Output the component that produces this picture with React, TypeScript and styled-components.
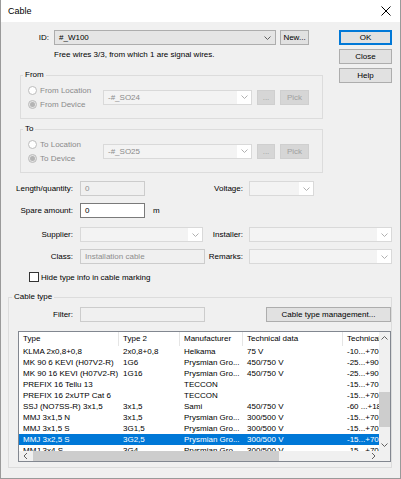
import styled, { createGlobalStyle } from 'styled-components';

const GlobalStyle = createGlobalStyle`
  html, body {
    margin: 0;
    padding: 0;
    background: #f0f0f0;
  }
  body {
    font-family: 'Liberation Sans', Arial, sans-serif;
    font-size: 8px;
    color: #000;
  }
  * {
    box-sizing: border-box;
  }
`;

type CableRow = {
  type: string;
  type2: string;
  maker: string;
  tech: string;
  temp: string;
};

const COLUMNS: { key: keyof CableRow; title: string; width: number }[] = [
  { key: 'type', title: 'Type', width: 100 },
  { key: 'type2', title: 'Type 2', width: 61 },
  { key: 'maker', title: 'Manufacturer', width: 63 },
  { key: 'tech', title: 'Technical data', width: 100 },
  { key: 'temp', title: 'Technical data 2', width: 90 },
];

const ROWS: CableRow[] = [
  { type: 'KLMA 2x0,8+0,8', type2: '2x0,8+0,8', maker: 'Helkama', tech: '75 V', temp: '-10...+70' },
  { type: 'MK 90 6 KEVI (H07V2-R)', type2: '1G6', maker: 'Prysmian Gro...', tech: '450/750 V', temp: '-25...+90' },
  { type: 'MK 90 16 KEVI (H07V2-R)', type2: '1G16', maker: 'Prysmian Gro...', tech: '450/750 V', temp: '-25...+90' },
  { type: 'PREFIX 16 Tellu 13', type2: '', maker: 'TECCON', tech: '', temp: '-15...+70' },
  { type: 'PREFIX 16 2xUTP Cat 6', type2: '', maker: 'TECCON', tech: '', temp: '-15...+70' },
  { type: 'SSJ (NO7SS-R) 3x1,5', type2: '3x1,5', maker: 'Sami', tech: '450/750 V', temp: '-60 ...+180' },
  { type: 'MMJ 3x1,5 N', type2: '3x1,5', maker: 'Prysmian Gro...', tech: '300/500 V', temp: '-15...+70' },
  { type: 'MMJ 3x1,5 S', type2: '3G1,5', maker: 'Prysmian Gro...', tech: '300/500 V', temp: '-15...+70' },
  { type: 'MMJ 3x2,5 S', type2: '3G2,5', maker: 'Prysmian Gro...', tech: '300/500 V', temp: '-15...+70' },
  { type: 'MMJ 3x4 S', type2: '3G4', maker: 'Prysmian Gro...', tech: '300/500 V', temp: '-15...+70' },
];

const SELECTED = 8;

const Window = styled.div`
  width: 401px;
  height: 479px;
  display: flex;
  flex-direction: column;
  background: #f0f0f0;
  border: 1px solid #9a9a9a;
  border-top: none;
  overflow: hidden;
`;

const TitleBar = styled.div`
  height: 22px;
  flex-shrink: 0;
  background: #fff;
  display: flex;
  align-items: center;
  justify-content: space-between;
  padding: 0 9px 0 7px;
`;

const Title = styled.span`
  font-size: 9px;
  color: #000;
`;

const Body = styled.div`
  padding: 0 8px 0 7px;
`;

const TopArea = styled.div`
  display: flex;
`;

const MainCol = styled.div`
  flex: 1;
`;

const ButtonCol = styled.div`
  width: 53px;
  padding-top: 8px;
  display: flex;
  flex-direction: column;
  gap: 4px;
`;

const IdRow = styled.div`
  margin-top: 8px;
  height: 15px;
  display: flex;
  align-items: center;
`;

const IdLabel = styled.span`
  width: 41px;
  text-align: right;
  margin-right: 5px;
`;

const InfoText = styled.div`
  margin: 4px 0 0 46px;
  line-height: 11px;
`;

const Button = styled.button<{ $w?: number; $default?: boolean; $h?: number }>`
  width: ${(p) => (p.$w ? `${p.$w}px` : '100%')};
  height: ${(p) => p.$h ?? 15}px;
  flex-shrink: 0;
  padding: 0;
  font-family: inherit;
  font-size: 8px;
  color: #000;
  background: #e1e1e1;
  border: 1px solid ${(p) => (p.$default ? '#0078d7' : '#adadad')};
  box-shadow: ${(p) => (p.$default ? 'inset 0 0 0 1px #0078d7' : 'none')};

  &:disabled {
    color: #a0a0a0;
    background: #d6d6d6;
    border-color: #cfcfcf;
  }
`;

const ComboBox = styled.div<{ $w?: number; $readonly?: boolean }>`
  width: ${(p) => (p.$w ? `${p.$w}px` : '100%')};
  height: 15px;
  flex-shrink: 0;
  display: flex;
  border: 1px solid ${(p) => (p.$readonly ? '#adadad' : '#d9d9d9')};
  background: ${(p) => (p.$readonly ? '#e5e5e5' : '#f3f3f3')};
  color: ${(p) => (p.$readonly ? '#000' : '#8a8a8a')};
`;

const ComboText = styled.span`
  flex: 1;
  padding-left: 4px;
  line-height: 13px;
  white-space: nowrap;
  overflow: hidden;
`;

const ComboArrow = styled.span<{ $readonly?: boolean }>`
  width: ${(p) => (p.$readonly ? 16 : 14)}px;
  display: flex;
  align-items: center;
  justify-content: center;
  background: ${(p) => (p.$readonly ? 'transparent' : '#fff')};
`;

const TextField = styled.div<{ $w?: number; $editable?: boolean }>`
  width: ${(p) => (p.$w ? `${p.$w}px` : '100%')};
  height: 15px;
  flex-shrink: 0;
  padding-left: 4px;
  line-height: 13px;
  white-space: nowrap;
  border: 1px solid ${(p) => (p.$editable ? '#7a7a7a' : '#cccccc')};
  background: ${(p) => (p.$editable ? '#fff' : '#f0f0f0')};
  color: ${(p) => (p.$editable ? '#000' : '#8d8d8d')};
`;

const Group = styled.fieldset<{ $mt: number }>`
  margin: ${(p) => p.$mt}px 0 0;
  padding: 0;
  min-width: 0;
  border: 1px solid #dcdcdc;
`;

const LocationGroup = styled(Group)`
  margin-left: 12px;
  width: 303px;
`;

const Legend = styled.legend<{ $ml: number }>`
  margin-left: ${(p) => p.$ml}px;
  padding: 0 2px;
  line-height: 12px;
  font-size: 8px;
`;

const LocationBody = styled.div`
  padding: 2px 13px 7px 7px;
  display: flex;
  align-items: center;
  gap: 5px;
`;

const RadioCol = styled.div`
  width: 70px;
  display: flex;
  flex-direction: column;
`;

const RadioRow = styled.label`
  height: 14px;
  display: flex;
  align-items: center;
  gap: 3px;
  color: #8a8a8a;
  white-space: nowrap;
`;

const RadioCircle = styled.span<{ $checked?: boolean }>`
  width: 9px;
  height: 9px;
  border-radius: 50%;
  border: 1px solid #bcbcbc;
  background: ${(p) => (p.$checked ? '#e4e4e4' : '#fff')};
  display: flex;
  align-items: center;
  justify-content: center;

  &::after {
    content: '';
    width: 5px;
    height: 5px;
    border-radius: 50%;
    background: ${(p) => (p.$checked ? '#b4b4b4' : 'transparent')};
  }
`;

const FormGrid = styled.div`
  margin-top: 8px;
  display: grid;
  grid-template-columns: 72px 125px 44px 143px;
  grid-template-rows: 22px 24px 22px 15px;
  align-items: start;
`;

const FieldLabel = styled.span<{ $pr: number }>`
  height: 15px;
  display: flex;
  align-items: center;
  justify-content: flex-end;
  padding-right: ${(p) => p.$pr}px;
  white-space: nowrap;
`;

const FieldCell = styled.div`
  display: flex;
  align-items: center;
`;

const Unit = styled.span`
  margin-left: 8px;
`;

const CheckRow = styled.label`
  margin: 8px 0 0 21px;
  height: 10px;
  display: flex;
  align-items: center;
  gap: 2px;
`;

const CheckBox = styled.span`
  width: 10px;
  height: 10px;
  border: 1px solid #333;
  background: #fff;
`;

const FilterRow = styled.div`
  margin-top: 4px;
  height: 15px;
  display: flex;
  align-items: center;
`;

const FilterLabel = styled.span`
  width: 71px;
  padding-right: 7px;
  text-align: right;
`;

const ListBox = styled.div`
  margin: 9px 0 5px 9px;
  height: 131px;
  border: 1px solid #828790;
  background: #fff;
  display: grid;
  grid-template-columns: 1fr 11px;
  grid-template-rows: 1fr 10px;
`;

const Viewport = styled.div`
  overflow: hidden;
`;

const HeaderRow = styled.div`
  height: 14px;
  display: flex;
  background: #fff;
`;

const HeaderCell = styled.div<{ $w: number }>`
  width: ${(p) => p.$w}px;
  flex-shrink: 0;
  padding-left: 4px;
  line-height: 14px;
  white-space: nowrap;
  overflow: hidden;
  border-right: 1px solid #e5e5e5;
`;

const DataRow = styled.div<{ $selected?: boolean }>`
  height: 11px;
  display: flex;
  background: ${(p) => (p.$selected ? '#0078d7' : 'transparent')};
  color: ${(p) => (p.$selected ? '#fff' : '#000')};
`;

const DataCell = styled.div<{ $w: number }>`
  width: ${(p) => p.$w}px;
  flex-shrink: 0;
  padding-left: 4px;
  line-height: 11px;
  white-space: nowrap;
  overflow: hidden;
`;

const VScroll = styled.div`
  background: #f0f0f0;
  display: flex;
  flex-direction: column;
`;

const HScroll = styled.div`
  background: #f0f0f0;
  display: flex;
`;

const ScrollArrow = styled.div<{ $vertical?: boolean }>`
  flex-shrink: 0;
  width: ${(p) => (p.$vertical ? '100%' : '12px')};
  height: ${(p) => (p.$vertical ? '12px' : '100%')};
  display: flex;
  align-items: center;
  justify-content: center;
`;

const Track = styled.div<{ $vertical?: boolean }>`
  flex: 1;
  display: flex;
  flex-direction: ${(p) => (p.$vertical ? 'column' : 'row')};
`;

const Thumb = styled.div<{ $vertical?: boolean; $offset: number; $size: number }>`
  background: #cdcdcd;
  ${(p) =>
    p.$vertical
      ? `margin-top: ${p.$offset}px; height: ${p.$size}px; width: 100%;`
      : `margin-left: ${p.$offset}px; width: ${p.$size}px; height: 100%;`}
`;

const Corner = styled.div`
  background: #f0f0f0;
`;

function Chevron({ dir = 'down', color = '#606060' }: { dir?: 'down' | 'up' | 'left' | 'right'; color?: string }) {
  const rot = { down: 0, up: 180, left: 90, right: -90 }[dir];
  return (
    <svg width="7" height="4" viewBox="0 0 7 4" style={{ transform: `rotate(${rot}deg)` }}>
      <polyline points="0.5,0.5 3.5,3.5 6.5,0.5" fill="none" stroke={color} strokeWidth="1" />
    </svg>
  );
}

function CloseIcon() {
  return (
    <svg width="10" height="10" viewBox="0 0 10 10">
      <path d="M0.5 0.5 L9.5 9.5 M9.5 0.5 L0.5 9.5" stroke="#000" strokeWidth="1" fill="none" />
    </svg>
  );
}

function Combo({ text = '', w, readonly }: { text?: string; w?: number; readonly?: boolean }) {
  return (
    <ComboBox $w={w} $readonly={readonly}>
      <ComboText>{text}</ComboText>
      <ComboArrow $readonly={readonly}>
        <Chevron color={readonly ? '#606060' : '#b0b0b0'} />
      </ComboArrow>
    </ComboBox>
  );
}

function Location({ label, device, top }: { label: string; device: string; top: number }) {
  return (
    <LocationGroup $mt={top}>
      <Legend $ml={2}>{label}</Legend>
      <LocationBody>
        <RadioCol>
          <RadioRow>
            <RadioCircle />
            {label} Location
          </RadioRow>
          <RadioRow>
            <RadioCircle $checked />
            {label} Device
          </RadioRow>
        </RadioCol>
        <Combo text={device} w={149} />
        <Button $w={18} disabled>
          ...
        </Button>
        <Button $w={29} disabled>
          Pick
        </Button>
      </LocationBody>
    </LocationGroup>
  );
}

function CableList() {
  return (
    <ListBox>
      <Viewport>
        <HeaderRow>
          {COLUMNS.map((c) => (
            <HeaderCell key={c.key} $w={c.width}>
              {c.title}
            </HeaderCell>
          ))}
        </HeaderRow>
        {ROWS.map((r, i) => (
          <DataRow key={r.type} $selected={i === SELECTED}>
            {COLUMNS.map((c) => (
              <DataCell key={c.key} $w={c.width}>
                {r[c.key]}
              </DataCell>
            ))}
          </DataRow>
        ))}
      </Viewport>
      <VScroll>
        <ScrollArrow $vertical>
          <Chevron dir="up" />
        </ScrollArrow>
        <Track $vertical>
          <Thumb $vertical $offset={48} $size={35} />
        </Track>
        <ScrollArrow $vertical>
          <Chevron dir="down" />
        </ScrollArrow>
      </VScroll>
      <HScroll>
        <ScrollArrow>
          <Chevron dir="left" />
        </ScrollArrow>
        <Track>
          <Thumb $offset={2} $size={246} />
        </Track>
        <ScrollArrow>
          <Chevron dir="right" />
        </ScrollArrow>
      </HScroll>
      <Corner />
    </ListBox>
  );
}

export default function App() {
  return (
    <>
      <GlobalStyle />
      <Window>
        <TitleBar>
          <Title>Cable</Title>
          <CloseIcon />
        </TitleBar>
        <Body>
          <TopArea>
            <MainCol>
              <IdRow>
                <IdLabel>ID:</IdLabel>
                <Combo text="#_W100" w={222} readonly />
                <Button $w={29} style={{ marginLeft: 4 }}>
                  New...
                </Button>
              </IdRow>
              <InfoText>Free wires 3/3, from which 1 are signal wires.</InfoText>
              <Location label="From" device="-#_SO24" top={9} />
              <Location label="To" device="-#_SO25" top={4} />
            </MainCol>
            <ButtonCol>
              <Button $default>OK</Button>
              <Button>Close</Button>
              <Button>Help</Button>
            </ButtonCol>
          </TopArea>

          <FormGrid>
            <FieldLabel $pr={7}>Length/quantity:</FieldLabel>
            <FieldCell>
              <TextField $w={65}>0</TextField>
            </FieldCell>
            <FieldLabel $pr={6}>Voltage:</FieldLabel>
            <FieldCell>
              <Combo w={65} />
            </FieldCell>

            <FieldLabel $pr={7}>Spare amount:</FieldLabel>
            <FieldCell>
              <TextField $w={65} $editable>
                0
              </TextField>
              <Unit>m</Unit>
            </FieldCell>
            <span />
            <span />

            <FieldLabel $pr={7}>Supplier:</FieldLabel>
            <FieldCell>
              <Combo w={123} />
            </FieldCell>
            <FieldLabel $pr={6}>Installer:</FieldLabel>
            <FieldCell>
              <Combo />
            </FieldCell>

            <FieldLabel $pr={7}>Class:</FieldLabel>
            <FieldCell>
              <TextField>Installation cable</TextField>
            </FieldCell>
            <FieldLabel $pr={6}>Remarks:</FieldLabel>
            <FieldCell>
              <Combo />
            </FieldCell>
          </FormGrid>

          <CheckRow>
            <CheckBox />
            Hide type info in cable marking
          </CheckRow>

          <Group $mt={9}>
            <Legend $ml={3}>Cable type</Legend>
            <FilterRow>
              <FilterLabel>Filter:</FilterLabel>
              <TextField $w={125} />
              <Button $w={125} style={{ marginLeft: 'auto' }}>
                Cable type management...
              </Button>
            </FilterRow>
            <CableList />
          </Group>
        </Body>
      </Window>
    </>
  );
}
